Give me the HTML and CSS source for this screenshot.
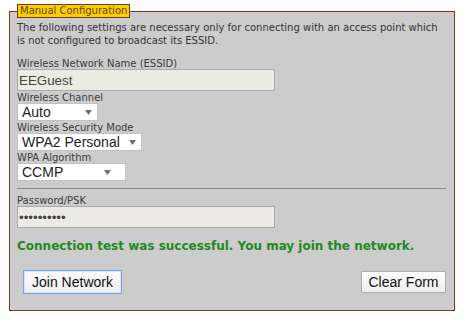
FILE: index.html
```html
<!DOCTYPE html>
<html lang="en">
<head>
<meta charset="utf-8">
<title>Manual Configuration</title>
<link rel="stylesheet" href="styles.css">
</head>
<body>
<form class="panel">
  <fieldset class="box">
    <legend class="legend">Manual Configuration</legend>
    <p class="desc">The following settings are necessary only for connecting with an access point which is not configured to broadcast its ESSID.</p>

    <label class="lbl lbl-first" for="essid">Wireless Network Name (ESSID)</label>
    <input class="txt" id="essid" type="text" value="EEGuest">

    <label class="lbl" for="chan">Wireless Channel</label>
    <span class="sel sel-chan">
      <select id="chan"><option>Auto</option></select>
      <svg class="arr" width="7" height="5" viewBox="0 0 7 5"><path d="M0 0H7L3.5 5Z"/></svg>
    </span>

    <label class="lbl" for="mode">Wireless Security Mode</label>
    <span class="sel sel-mode">
      <select id="mode"><option>WPA2 Personal</option></select>
      <svg class="arr" width="7" height="5" viewBox="0 0 7 5"><path d="M0 0H7L3.5 5Z"/></svg>
    </span>

    <label class="lbl" for="alg">WPA Algorithm</label>
    <span class="sel sel-alg">
      <select id="alg"><option>CCMP</option></select>
      <svg class="arr arr-alg" width="7" height="5" viewBox="0 0 7 5"><path d="M0 0H7L3.5 5Z"/></svg>
    </span>

    <hr class="rule">

    <label class="lbl lbl-psk" for="psk">Password/PSK</label>
    <input class="txt" id="psk" type="password" value="abcdefghij">

    <p class="ok">Connection test was successful. You may join the network.</p>

    <div class="actions">
      <button type="button" class="btn btn-join">Join Network</button>
      <button type="reset" class="btn btn-clear">Clear Form</button>
    </div>
  </fieldset>
</form>
</body>
</html>
```
FILE: styles.css
```css
html, body {
  margin: 0;
  background: #ffffff;
}
body {
  padding: 4px 0 0 9px;
  font-family: "DejaVu Sans", Verdana, sans-serif;
  font-size: 10px;
  color: #333333;
}
.panel {
  margin: 0;
  width: 446px;
}
.box {
  margin: 0;
  min-width: 0;
  box-sizing: border-box;
  width: 446px;
  height: 307px;
  border: 1px solid #86301f;
  background: #cccccc;
  padding: 3px 8px 0 7px;
}
.legend {
  padding: 0 2px;
  margin: 0;
  border: 1px solid #6b3d0c;
  background: #ffcc00;
  color: #5f4a00;
  font-size: 10px;
  line-height: 12px;
}
.desc {
  margin: 0 0 11px;
  line-height: 13px;
  color: #333333;
}
.lbl {
  display: block;
  margin-top: 1px;
  line-height: 11px;
  color: #3a3a3a;
}
.lbl-first { margin-top: 0; }
.lbl-psk { margin-top: 6px; }
.txt {
  display: block;
  box-sizing: border-box;
  width: 258px;
  height: 22px;
  margin: 0;
  padding: 0 1px;
  border: 1px solid #a9a9a9;
  background: #ebebe4;
  font-family: "Liberation Sans", Arial, sans-serif;
  font-size: 13.33px;
  color: #444444;
  outline: none;
}
.sel {
  display: flex;
  align-items: center;
  box-sizing: border-box;
  height: 18px;
  border: 1px solid #c2c2c2;
  background: #ffffff;
}
.sel select {
  flex: 1;
  min-width: 0;
  height: 16px;
  margin: 0;
  padding: 0 0 0 4px;
  border: 0;
  background: transparent;
  appearance: none;
  -webkit-appearance: none;
  font-family: "Liberation Sans", Arial, sans-serif;
  font-size: 14px;
  line-height: 16px;
  color: #222222;
  outline: none;
}
.sel-chan { width: 81px; }
.sel-mode { width: 125px; }
.sel-alg { width: 109px; }
.arr {
  flex: none;
  margin-right: 5px;
  fill: #707070;
}
.arr-alg { margin-right: 14px; }
.rule {
  margin: 7px 0 0;
  border: 0;
  height: 1px;
  background: #888888;
}
.ok {
  margin: 11px 0 0;
  font-size: 12px;
  font-weight: bold;
  line-height: 15px;
  color: #23891f;
}
.actions {
  display: flex;
  align-items: center;
  justify-content: space-between;
  margin-top: 16px;
  padding: 0 0 0 6px;
}
.btn {
  box-sizing: border-box;
  margin: 0;
  font-family: "Liberation Sans", Arial, sans-serif;
  font-size: 14px;
  color: #111111;
  background: linear-gradient(#fdfdfd, #ededed);
  border-radius: 0;
  cursor: pointer;
}
.btn-join {
  width: 99px;
  height: 24px;
  padding: 0;
  border: 1px solid #7aa4d8;
  box-shadow: inset 0 0 0 1px #d6e6f7;
}
.btn-clear {
  width: 85px;
  height: 22px;
  padding: 0;
  border: 1px solid #adadad;
}
```
